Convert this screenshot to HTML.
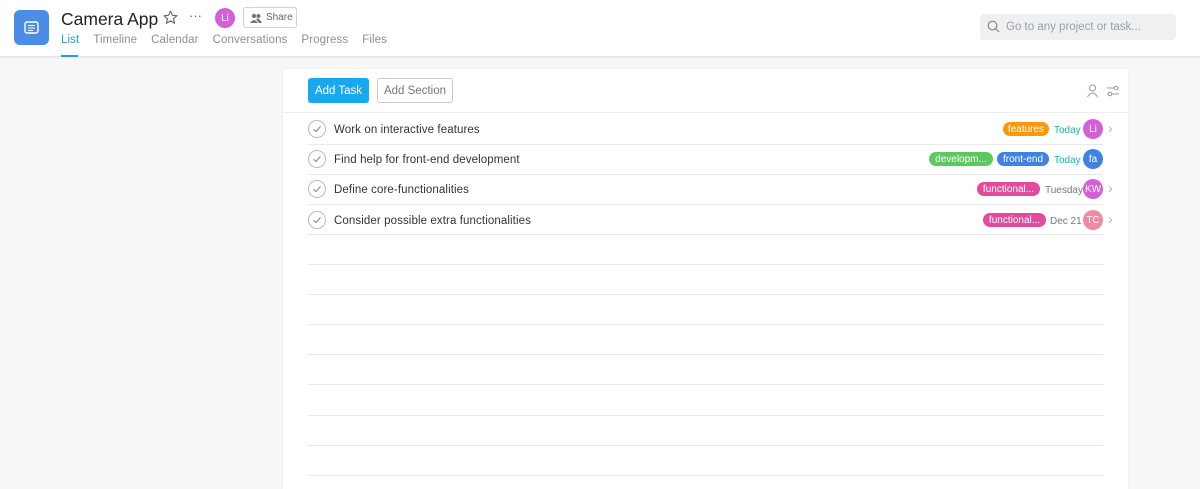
<!DOCTYPE html>
<html><head><style>
*{box-sizing:border-box;margin:0;padding:0}
body{width:1200px;height:480px;overflow:hidden;background:#f6f7f9;font-family:"Liberation Sans",sans-serif;position:relative}
.hdr{position:absolute;left:0;top:0;width:1200px;height:57px;background:#fff;border-bottom:1px solid #e4e6ea;box-shadow:0 1px 3px rgba(0,0,0,.05)}
.abs{position:absolute}
.logo{left:14px;top:10px;width:35px;height:35px;border-radius:6px;background:#4a8de6}
.title{left:61px;top:9px;font-size:17.5px;color:#222}
.tabs{left:61px;top:34px;font-size:11.5px;color:#8a9099;white-space:nowrap;letter-spacing:0.1px}
.tabs span{margin-right:14px}
.av{border-radius:50%;color:#fff;font-size:10px;display:flex;align-items:center;justify-content:center;width:20px;height:20px}
.search{left:980px;top:14px;width:196px;height:26px;background:#eef0f2;border-radius:4px;font-size:11.5px;color:#9aa0a8;padding:0 0 0 26px;display:flex;align-items:center}
.card{left:283px;top:69px;width:845px;height:420px;background:#fff;box-shadow:0 0 2px rgba(0,0,0,.08)}
.btn{top:78px;height:25px;border-radius:3px;font-size:11.5px;display:flex;align-items:center;justify-content:center}
.line{left:308px;width:795px;height:1px;background:#e6e8eb}
.row{left:308px;height:30px;width:810px;font-size:11.5px;color:#333}
.chk{position:absolute;left:0;top:6px;width:18px;height:18px;border:1px solid #b8bcc2;border-radius:50%}
.tag{position:absolute;top:8px;height:14px;border-radius:7px;color:#fff;font-size:10px;display:flex;align-items:center;justify-content:center}
.dt{position:absolute;top:11px;font-size:10px;white-space:nowrap}
.chev{position:absolute;left:800px;top:6px;color:#b0b4ba;font-size:14px}
.txt{position:absolute;left:26px;top:10px;letter-spacing:0.1px}
</style></head><body>
<div class="hdr"></div>
<div class="abs logo"><svg width="35" height="35"><rect x="11" y="12" width="13" height="11" rx="2" fill="none" stroke="#fff" stroke-width="1.4"/><line x1="14" y1="15.5" x2="21" y2="15.5" stroke="#fff"/><line x1="14" y1="18" x2="21" y2="18" stroke="#fff"/><line x1="14" y1="20.5" x2="19" y2="20.5" stroke="#fff"/></svg></div>
<div class="abs title">Camera App</div>
<svg class="abs" style="left:163px;top:10px" width="15" height="15"><path d="M7.5 1 L9.4 5.3 L14 5.7 L10.5 8.7 L11.6 13.3 L7.5 10.9 L3.4 13.3 L4.5 8.7 L1 5.7 L5.6 5.3Z" fill="none" stroke="#666" stroke-width="1.1" stroke-linejoin="round"/></svg>
<div class="abs" style="left:189px;top:8px;font-size:13px;color:#666">···</div>
<div class="abs av" style="left:215px;top:8px;background:#d55fd8">Li</div>
<div class="abs" style="left:243px;top:7px;width:54px;height:21px;border:1px solid #cfd3d8;border-radius:3px;font-size:10px;color:#666;line-height:19px;padding-left:22px">Share<svg class="abs" style="left:6px;top:5px" width="12" height="10"><circle cx="4" cy="3" r="2.2" fill="#777"/><path d="M0 10 Q4 4 8 10Z" fill="#777"/><circle cx="8.5" cy="3" r="2" fill="#777"/><path d="M6 6 Q9 4 12 10H9Z" fill="#777"/></svg></div>
<div class="abs tabs"><span style="color:#1fa0e6">List</span><span>Timeline</span><span>Calendar</span><span>Conversations</span><span>Progress</span><span>Files</span></div>
<div class="abs" style="left:61px;top:55px;width:17px;height:2px;background:#1fa0e6"></div>
<div class="abs search">Go to any project or task...</div>
<svg class="abs" style="left:987px;top:20px" width="13" height="13"><circle cx="5.5" cy="5.5" r="4.3" fill="none" stroke="#888" stroke-width="1.2"/><line x1="8.5" y1="8.5" x2="12" y2="12" stroke="#888" stroke-width="1.2"/></svg>
<div class="abs card"></div>
<div class="abs btn" style="left:308px;width:61px;background:#18a8f0;color:#fff">Add Task</div>
<div class="abs btn" style="left:377px;width:76px;border:1px solid #c8ccd2;color:#777">Add Section</div>
<svg class="abs" style="left:1087px;top:84px" width="34" height="14"><circle cx="5.5" cy="4" r="3" fill="none" stroke="#999"/><path d="M0.5 13 Q5.5 5 10.5 13" fill="none" stroke="#999"/><line x1="20" y1="4" x2="32" y2="4" stroke="#999"/><line x1="20" y1="10" x2="32" y2="10" stroke="#999"/><circle cx="29" cy="4" r="1.8" fill="#fff" stroke="#999"/><circle cx="23" cy="10" r="1.8" fill="#fff" stroke="#999"/></svg>
<div class="abs" style="left:283px;top:112px;width:845px;height:1px;background:#eceef0"></div>

<div class="abs row" style="top:114px"><div class="chk"><svg width="16" height="16"><path d="M4.5 8.3 L7 10.5 L11.5 5.5" fill="none" stroke="#888" stroke-width="1.1"/></svg></div><span class="txt">Work on interactive features</span>
<div class="tag" style="left:695px;width:46px;background:#f79a0a">features</div><div class="dt" style="left:746px;color:#1bb5a3">Today</div><div class="av abs" style="left:775px;top:5px;background:#d55fd8">Li</div><div class="chev">›</div></div>
<div class="abs row" style="top:144px"><div class="chk"><svg width="16" height="16"><path d="M4.5 8.3 L7 10.5 L11.5 5.5" fill="none" stroke="#888" stroke-width="1.1"/></svg></div><span class="txt">Find help for front-end development</span>
<div class="tag" style="left:621px;width:64px;background:#5fc760">developm...</div><div class="tag" style="left:689px;width:52px;background:#3f82e0">front-end</div><div class="dt" style="left:746px;color:#1bb5a3">Today</div><div class="av abs" style="left:775px;top:5px;background:#3f82e0">fa</div></div>
<div class="abs row" style="top:174px"><div class="chk"><svg width="16" height="16"><path d="M4.5 8.3 L7 10.5 L11.5 5.5" fill="none" stroke="#888" stroke-width="1.1"/></svg></div><span class="txt">Define core-functionalities</span>
<div class="tag" style="left:669px;width:63px;background:#e34b9d">functional...</div><div class="dt" style="left:737px;color:#777">Tuesday</div><div class="av abs" style="left:775px;top:5px;background:#d55fd8">KW</div><div class="chev">›</div></div>
<div class="abs row" style="top:205px"><div class="chk"><svg width="16" height="16"><path d="M4.5 8.3 L7 10.5 L11.5 5.5" fill="none" stroke="#888" stroke-width="1.1"/></svg></div><span class="txt">Consider possible extra functionalities</span>
<div class="tag" style="left:675px;width:63px;background:#e34b9d">functional...</div><div class="dt" style="left:742px;color:#777">Dec 21</div><div class="av abs" style="left:775px;top:5px;background:#f08aa0">TC</div><div class="chev">›</div></div>

<div class="abs line" style="top:144px"></div><div class="abs line" style="top:174px"></div><div class="abs line" style="top:204px"></div><div class="abs line" style="top:234px"></div><div class="abs line" style="top:264px"></div><div class="abs line" style="top:294px"></div><div class="abs line" style="top:324px"></div><div class="abs line" style="top:354px"></div><div class="abs line" style="top:384px"></div><div class="abs line" style="top:415px"></div><div class="abs line" style="top:445px"></div><div class="abs line" style="top:475px"></div>
</body></html>
